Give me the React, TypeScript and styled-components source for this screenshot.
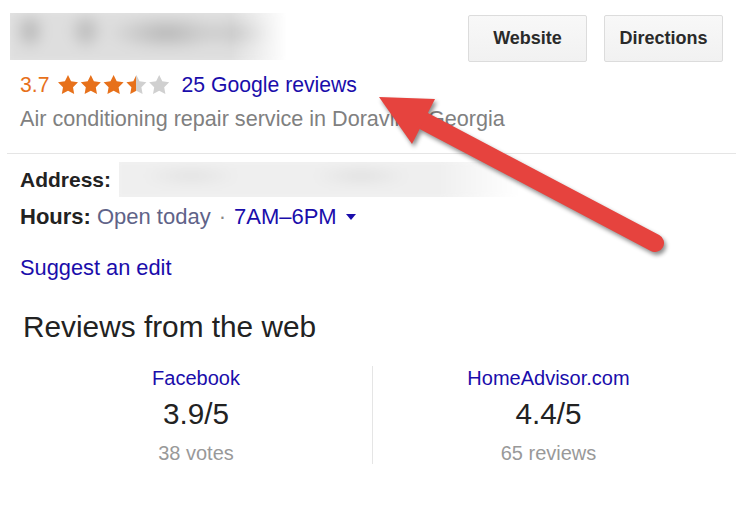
import React from 'react';
import styled, { createGlobalStyle } from 'styled-components';

const GlobalStyle = createGlobalStyle`
  html, body {
    margin: 0;
    padding: 0;
    background: #fff;
  }
  body {
    font-family: 'Liberation Sans', Arial, sans-serif;
    color: #222;
  }
`;

const Page = styled.div`
  position: relative;
  width: 736px;
  height: 531px;
  overflow: hidden;
  background: #fff;
`;

const Header = styled.div`
  display: flex;
  justify-content: space-between;
  align-items: flex-start;
  padding: 13px 13px 0 10px;
`;

/* redacted business name / address */
const Smudge = styled.div<{ $w: number; $h: number; $base: string }>`
  position: relative;
  width: ${p => p.$w}px;
  height: ${p => p.$h}px;
  overflow: hidden;
  -webkit-mask-image: linear-gradient(to right, #000 80%, transparent 100%);
  mask-image: linear-gradient(to right, #000 80%, transparent 100%);

  &::before {
    content: '';
    position: absolute;
    inset: -8px;
    background: ${p => p.$base};
    filter: blur(6px);
  }
`;

const Actions = styled.div`
  display: flex;
  gap: 17px;
  margin-top: 2px;
`;

const ActionButton = styled.button`
  width: 119px;
  height: 47px;
  background: linear-gradient(#f8f8f8, #f1f1f1);
  border: 1px solid #dcdcdc;
  border-radius: 2px;
  font-family: 'Liberation Sans', Arial, sans-serif;
  font-weight: bold;
  font-size: 18px;
  color: #2a2a2a;
  padding: 0;
`;

const Summary = styled.div`
  padding-left: 20px;
  margin-top: 6px;
`;

const Line = styled.div`
  display: flex;
  align-items: center;
  height: 34px;
  font-size: 21.2px;
  white-space: nowrap;
`;

const Score = styled.span`
  color: #e7711b;
`;

const Stars = styled.svg`
  margin: 0 10px 0 8px;
`;

const Link = styled.span`
  color: #1a0dab;
`;

const Category = styled(Line)`
  color: #808080;
  font-size: 21.6px;
`;

const Divider = styled.div`
  height: 1px;
  margin: 17px 0 0 7px;
  background: #e5e5e5;
`;

const Details = styled.div`
  padding: 7px 0 0 20px;
`;

const DetailRow = styled.div<{ $size?: number }>`
  display: flex;
  align-items: center;
  height: 37px;
  font-size: ${p => p.$size ?? 21}px;
  white-space: nowrap;
`;

const Label = styled.b<{ $gap?: number }>`
  color: #222;
  margin-right: ${p => p.$gap ?? 8}px;
`;

const Muted = styled.span`
  color: #5f6388;
`;

const Dot = styled.span`
  color: #888;
  margin: 0 8px;
`;

const Caret = styled.span`
  display: inline-block;
  width: 0;
  height: 0;
  margin-left: 9px;
  border-left: 5px solid transparent;
  border-right: 5px solid transparent;
  border-top: 6px solid #1a0dab;
`;

const SuggestRow = styled(DetailRow)`
  margin-top: 16px;
  height: 34px;
`;

const Heading = styled.h2`
  margin: 24px 0 0 23px;
  height: 36px;
  line-height: 36px;
  font-size: 29.8px;
  font-weight: normal;
  color: #222;
`;

const Sources = styled.div`
  display: grid;
  grid-template-columns: 1fr 1fr;
  width: 704px;
  margin: 21px 0 0 20px;
`;

const Source = styled.div<{ $divided?: boolean }>`
  display: flex;
  flex-direction: column;
  align-items: center;
  ${p => p.$divided && 'border-left: 1px solid #e5e5e5;'}
`;

const SourceName = styled.div`
  color: #1a0dab;
  font-size: 20px;
  line-height: 22px;
  padding-top: 1px;
`;

const SourceScore = styled.div`
  color: #222;
  font-size: 29.7px;
  line-height: 34px;
  margin-top: 8px;
`;

const SourceCount = styled.div`
  color: #999;
  font-size: 20px;
  line-height: 22px;
  margin: 11px 0 0;
`;

const Arrow = styled.svg`
  position: absolute;
  left: 0;
  top: 0;
  pointer-events: none;
  filter: drop-shadow(2px 3px 2px rgba(0, 0, 0, 0.45));
`;

const STAR = '12,2 15.09,8.26 22,9.27 17,14.14 18.18,21.02 12,17.77 5.82,21.02 7,14.14 2,9.27 8.91,8.26';

const RatingStars: React.FC<{ value: number }> = ({ value }) => (
  <Stars width="114" height="22" viewBox="0 0 114 22">
    <defs>
      <linearGradient id="half">
        <stop offset="50%" stopColor="#e7711b" />
        <stop offset="50%" stopColor="#d0d0d0" />
      </linearGradient>
    </defs>
    {[0, 1, 2, 3, 4].map(i => {
      const fill = value >= i + 1 ? '#e7711b' : value >= i + 0.5 ? 'url(#half)' : '#d0d0d0';
      return (
        <g key={i} transform={`translate(${i * 22.8 - 1}, -1)`}>
          <polygon points={STAR} fill={fill} />
        </g>
      );
    })}
  </Stars>
);

const titleBlur =
  'radial-gradient(ellipse 16px 20px at 28px 26px, #b4b4b4, transparent),' +
  'radial-gradient(ellipse 18px 20px at 84px 26px, #b8b8b8, transparent),' +
  'radial-gradient(ellipse 60px 18px at 165px 28px, #b6b6b6, transparent),' +
  'radial-gradient(ellipse 45px 16px at 240px 28px, #c4c4c4, transparent),' +
  '#dedede';

const addressBlur =
  'radial-gradient(ellipse 50px 10px at 80px 22px, #e0e0e0, transparent),' +
  'radial-gradient(ellipse 50px 10px at 250px 22px, #dedede, transparent),' +
  '#efefef';

const sources = [
  { name: 'Facebook', score: '3.9/5', count: '38 votes' },
  { name: 'HomeAdvisor.com', score: '4.4/5', count: '65 reviews' },
];

export default function App() {
  return (
    <Page>
      <GlobalStyle />
      <Header>
        <Smudge $w={277} $h={47} $base={titleBlur} />
        <Actions>
          <ActionButton>Website</ActionButton>
          <ActionButton>Directions</ActionButton>
        </Actions>
      </Header>

      <Summary>
        <Line>
          <Score>3.7</Score>
          <RatingStars value={3.5} />
          <Link>25 Google reviews</Link>
        </Line>
        <Category>Air conditioning repair service in Doraville, Georgia</Category>
      </Summary>

      <Divider />

      <Details>
        <DetailRow>
          <Label>Address:</Label>
          <Smudge $w={400} $h={35} $base={addressBlur} />
        </DetailRow>
        <DetailRow $size={22}>
          <Label $gap={6}>Hours:</Label>
          <Muted>Open today</Muted>
          <Dot>·</Dot>
          <Link>7AM–6PM</Link>
          <Caret />
        </DetailRow>
        <SuggestRow $size={21.8}>
          <Link>Suggest an edit</Link>
        </SuggestRow>
      </Details>

      <Heading>Reviews from the web</Heading>

      <Sources>
        {sources.map((s, i) => (
          <Source key={s.name} $divided={i > 0}>
            <SourceName>{s.name}</SourceName>
            <SourceScore>{s.score}</SourceScore>
            <SourceCount>{s.count}</SourceCount>
          </Source>
        ))}
      </Sources>

      <Arrow width="736" height="531" viewBox="0 0 736 531">
        <line x1="655" y1="243" x2="420" y2="119" stroke="#e6433e" strokeWidth="18" strokeLinecap="round" />
        <polygon points="379,97 435,99 412,144" fill="#e6433e" />
      </Arrow>
    </Page>
  );
}
